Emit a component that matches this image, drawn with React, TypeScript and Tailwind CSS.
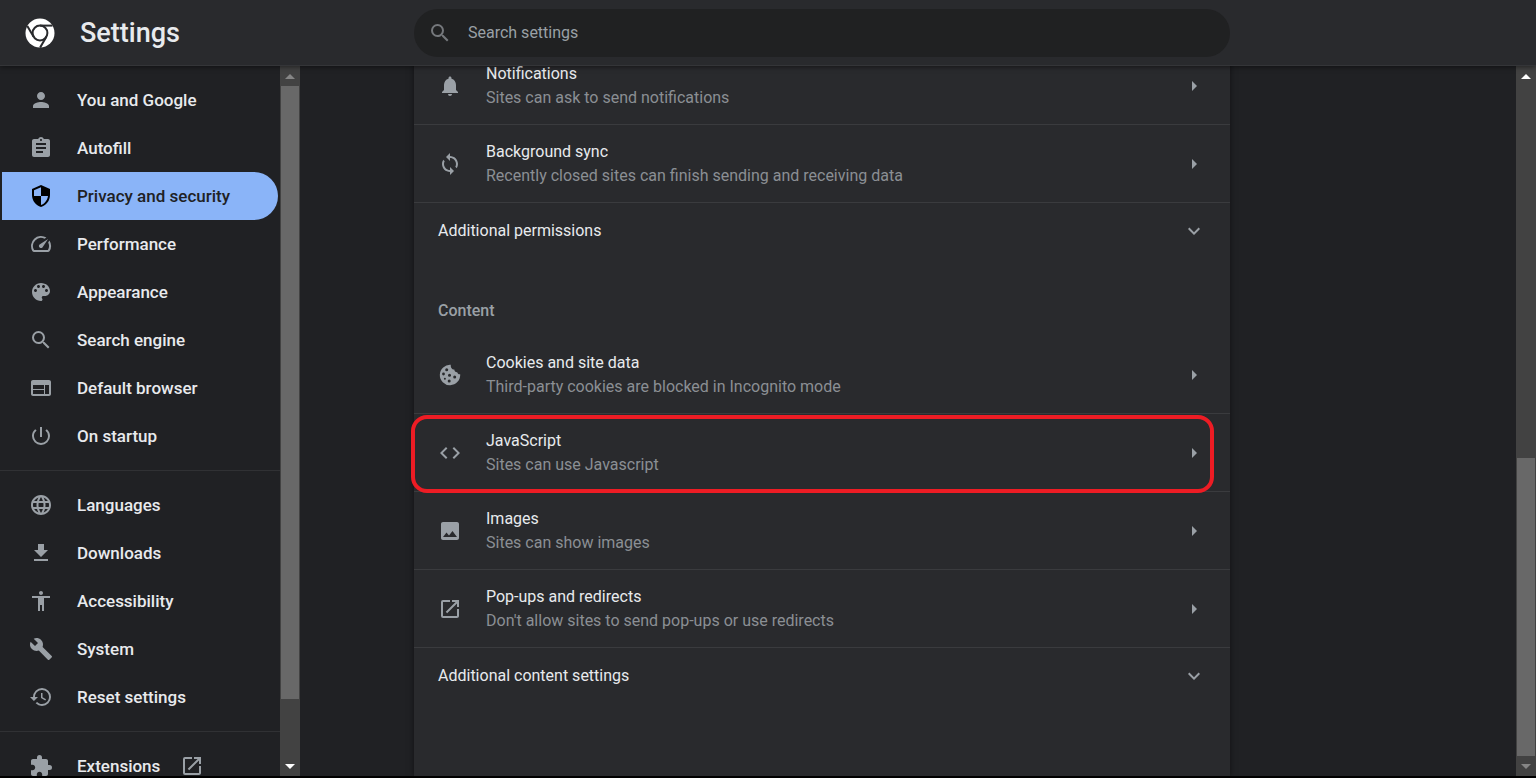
import type { ComponentType } from "react";
import {
  MdAccessibility,
  MdArrowRight,
  MdAssignment,
  MdBuild,
  MdCode,
  MdExpandMore,
  MdExtension,
  MdFileDownload,
  MdHistory,
  MdImage,
  MdLanguage,
  MdNotifications,
  MdOpenInNew,
  MdPerson,
  MdPowerSettingsNew,
  MdSearch,
  MdSecurity,
  MdSpeed,
  MdSync,
  MdWeb,
} from "react-icons/md";

type Icon = ComponentType<{ className?: string }>;
type MenuItem = { label: string; icon: Icon; active?: boolean; external?: boolean };
type Permission = { title: string; description: string; icon: Icon; highlighted?: boolean };

function PaletteIcon({ className }: { className?: string }) {
  return (
    <svg viewBox="0 0 24 24" fill="currentColor" className={className}>
      <path d="M12 3c-4.97 0-9 4.03-9 9s4.03 9 9 9c.83 0 1.5-.67 1.5-1.5 0-.39-.15-.74-.39-1.01-.23-.26-.38-.61-.38-.99 0-.83.67-1.5 1.5-1.5H16c2.76 0 5-2.24 5-5 0-4.42-4.03-8-9-8zm-5.500 9c-.83 0-1.500-.67-1.500-1.500S5.670 9 6.500 9 8 9.670 8 10.500 7.330 12 6.500 12zm3-4C8.670 8 8 7.330 8 6.500S8.670 5 9.500 5s1.500.67 1.500 1.500S10.330 8 9.500 8zm5 0c-.83 0-1.500-.67-1.500-1.500S13.670 5 14.500 5s1.500.67 1.500 1.500S15.330 8 14.500 8zm3 4c-.83 0-1.500-.67-1.500-1.500S16.670 9 17.500 9s1.500.67 1.500 1.500-.67 1.500-1.500 1.500z" />
    </svg>
  );
}

function CookieIcon({ className }: { className?: string }) {
  return (
    <svg viewBox="0 0 24 24" fill="currentColor" className={className}>
      <path d="M12.800 1.800A10.200 10.200 0 1 0 22.200 11.300c-1.500.2-2.700-.6-3-2-1.600.1-2.900-1-2.900-2.700-2.300.1-3.900-2.200-3.500-4.800z" />
      <g fill="#292a2d">
        <circle cx="8.700" cy="6.700" r="1.500" />
        <circle cx="5.500" cy="11" r="1.400" />
        <circle cx="11.500" cy="12.200" r="1.500" />
        <circle cx="16.700" cy="14" r="1.500" />
        <circle cx="11.200" cy="17.900" r="1.500" />
        <circle cx="6.900" cy="15.700" r="1" />
      </g>
    </svg>
  );
}

const menuGroups: MenuItem[][] = [
  [
    { label: "You and Google", icon: MdPerson },
    { label: "Autofill", icon: MdAssignment },
    { label: "Privacy and security", icon: MdSecurity, active: true },
    { label: "Performance", icon: MdSpeed },
    { label: "Appearance", icon: PaletteIcon },
    { label: "Search engine", icon: MdSearch },
    { label: "Default browser", icon: MdWeb },
    { label: "On startup", icon: MdPowerSettingsNew },
  ],
  [
    { label: "Languages", icon: MdLanguage },
    { label: "Downloads", icon: MdFileDownload },
    { label: "Accessibility", icon: MdAccessibility },
    { label: "System", icon: MdBuild },
    { label: "Reset settings", icon: MdHistory },
  ],
  [{ label: "Extensions", icon: MdExtension, external: true }],
];

const permissions: Permission[] = [
  { title: "Notifications", description: "Sites can ask to send notifications", icon: MdNotifications },
  { title: "Background sync", description: "Recently closed sites can finish sending and receiving data", icon: MdSync },
];

const content: Permission[] = [
  { title: "Cookies and site data", description: "Third-party cookies are blocked in Incognito mode", icon: CookieIcon },
  { title: "JavaScript", description: "Sites can use Javascript", icon: MdCode, highlighted: true },
  { title: "Images", description: "Sites can show images", icon: MdImage },
  { title: "Pop-ups and redirects", description: "Don't allow sites to send pop-ups or use redirects", icon: MdOpenInNew },
];

function ChromeLogo() {
  return (
    <svg viewBox="0 0 30 30" className="size-[30px]">
      <circle cx="15" cy="15" r="14.5" fill="#fff" />
      <g fill="none" stroke="#292a2d" strokeWidth="2">
        <circle cx="15" cy="15" r="7.4" />
        <path d="M15 7.6h12.500" />
        <path d="M8.600 18.700L2.300 7.900" />
        <path d="M21.400 18.700l-6.300 10.900" />
      </g>
    </svg>
  );
}

function Arrow({ up, dim }: { up?: boolean; dim?: boolean }) {
  return (
    <div className={`flex h-5 shrink-0 items-center justify-center ${dim ? "text-[#868686]" : "text-white"}`}>
      <svg viewBox="0 0 10 5" className={`h-[5px] w-2.5 ${up ? "" : "rotate-180"}`} fill="currentColor">
        <path d="M5 0l5 5H0z" />
      </svg>
    </div>
  );
}

function MenuLink({ item }: { item: MenuItem }) {
  const Icon = item.icon;
  return (
    <a
      href="#"
      className={`mx-0.5 flex h-12 items-center gap-6 rounded-r-full pl-[27px] text-[17px] font-medium ${
        item.active ? "bg-[#8ab4f8] text-[#202124]" : "text-[#e8eaed]"
      }`}>
      <Icon className={`size-6 shrink-0 ${item.active ? "text-black" : "text-[#9aa0a6]"}`} />
      <span>{item.label}</span>
      {item.external && <MdOpenInNew className="-ml-1 size-6 text-[#9aa0a6]" />}
    </a>
  );
}

function PermissionRow({ item }: { item: Permission }) {
  const Icon = item.icon;
  return (
    <button
      type="button"
      className="relative flex h-[78px] w-full items-center gap-6 border-b border-[#3a3b3e] px-6 text-left">
      <Icon className="size-6 shrink-0 text-[#9aa0a6]" />
      <span className="min-w-0 flex-1">
        <span className="block text-[#e8eaed]">{item.title}</span>
        <span className="block text-[#8b8f94]">{item.description}</span>
      </span>
      <MdArrowRight className="size-6 shrink-0 text-[#9aa0a6]" />
      {item.highlighted && (
        <span className="absolute top-px right-4 -bottom-0.5 -left-[3px] rounded-2xl border-4 border-[#ed1c24]" />
      )}
    </button>
  );
}

function ExpandRow({ label }: { label: string }) {
  return (
    <button type="button" className="flex w-full items-center justify-between px-6 py-4 text-left text-[#e8eaed]">
      {label}
      <MdExpandMore className="size-6 text-[#9aa0a6]" />
    </button>
  );
}

export default function App() {
  return (
    <div className="flex h-screen flex-col overflow-hidden border-b-2 border-black bg-[#202124] font-['Roboto',sans-serif] text-base leading-6">
      <header className="relative z-10 flex h-[66px] shrink-0 items-center border-b border-[#343538] bg-[#292a2d] shadow-[0_1px_5px_rgba(0,0,0,0.5)]">
        <div className="flex w-[414px] shrink-0 items-center gap-[25px] pl-[25px]">
          <ChromeLogo />
          <h1 className="text-[27px] leading-8 font-medium text-[#e8eaed]">Settings</h1>
        </div>
        <label className="flex h-12 max-w-[816px] flex-1 items-center gap-4 rounded-full bg-[#202122] pl-3.5">
          <MdSearch className="size-6 text-[#75787c]" />
          <input
            type="text"
            aria-label="Search settings"
            placeholder="Search settings"
            className="flex-1 bg-transparent text-[#e8eaed] outline-none placeholder:text-[#9aa0a6]"
          />
        </label>
      </header>

      <div className="flex min-h-0 flex-1">
        <nav className="w-[280px] shrink-0 overflow-hidden pt-2.5">
          {menuGroups.map((group, i) => (
            <div key={i} className={i > 0 ? "mt-2.5 border-t border-[#303134] pt-2.5" : ""}>
              {group.map((item) => (
                <MenuLink key={item.label} item={item} />
              ))}
            </div>
          ))}
        </nav>
        <div className="flex w-5 shrink-0 flex-col bg-[#424242]">
          <Arrow up dim />
          <div className="mx-px flex-[613] bg-[#686868]"></div>
          <div className="flex-[57]"></div>
          <Arrow />
        </div>

        <main className="flex min-w-0 flex-1 overflow-hidden pl-[114px]">
          <div className="-mt-[19px] max-w-[816px] flex-1 bg-[#292a2d] shadow-[0_0_6px_rgba(0,0,0,0.5)]">
            {permissions.map((item) => (
              <PermissionRow key={item.title} item={item} />
            ))}
            <ExpandRow label="Additional permissions" />
            <h2 className="px-6 pt-10 pb-[13px] font-medium text-[#9aa0a6]">Content</h2>
            {content.map((item) => (
              <PermissionRow key={item.title} item={item} />
            ))}
            <ExpandRow label="Additional content settings" />
          </div>
        </main>
        <div className="flex w-5 shrink-0 flex-col bg-[#424242]">
          <Arrow up />
          <div className="flex-[372]"></div>
          <div className="mx-px flex-[298] bg-[#686868]"></div>
          <Arrow dim />
        </div>
      </div>
    </div>
  );
}
